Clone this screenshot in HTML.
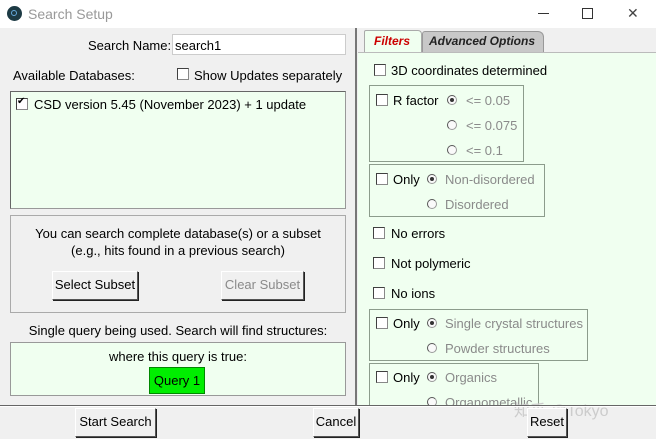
<!DOCTYPE html>
<html><head><meta charset="utf-8"><style>
*{margin:0;padding:0;box-sizing:border-box}
body{width:656px;height:439px;overflow:hidden;background:#f0f0f0;font-family:"Liberation Sans","DejaVu Sans",sans-serif;font-size:13px;color:#000;position:relative}
.a{position:absolute;white-space:nowrap}
.cb{position:absolute;width:12px;height:12px;background:#fff;border:1px solid #888;border-top-color:#404040;border-left-color:#404040}
.rd{position:absolute;width:10px;height:10px;border-radius:50%;border:1px solid #999;border-left-color:#555;border-top-color:#555;background:#fafafa}
.rd.on::after{content:"";position:absolute;left:2px;top:2px;width:4px;height:4px;border-radius:50%;background:#333}
.g{color:#8a8a8a}
.box{position:absolute;border:1px solid #8c9c8c}
.btn{position:absolute;background:#f0f0f0;border:1px solid;border-color:#fff #555 #555 #fff;box-shadow:1px 1px 0 #222;text-align:center;line-height:26px}
</style></head><body>
<div class="a" style="left:0;top:0;width:656px;height:28px;background:#fff"></div>
<div class="a" style="left:7px;top:6px;width:15px;height:15px;border-radius:50%;background:#1d3a44"></div>
<div class="a" style="left:11px;top:10px;width:6px;height:6px;border-radius:50%;border:1.5px solid #6ad"></div>
<div class="a g" style="left:28px;top:6px;font-size:14px;color:#999">Search Setup</div>
<div class="a" style="left:538px;top:13px;width:11px;height:1px;background:#333"></div>
<div class="a" style="left:582px;top:8px;width:11px;height:11px;border:1px solid #333"></div>
<div class="a" style="left:627px;top:5px;font-size:14px;color:#444">✕</div>
<!-- left -->
<div class="a" style="left:88px;top:38px">Search Name:</div>
<div class="a" style="left:172px;top:34px;width:174px;height:21px;background:#fff;border:1px solid #ccc;padding:3px 2px">search1</div>
<div class="a" style="left:13px;top:68px">Available Databases:</div>
<div class="cb" style="left:177px;top:68px"></div>
<div class="a" style="left:194px;top:68px">Show Updates separately</div>
<div class="a" style="left:10px;top:91px;width:336px;height:118px;background:#f0fff0;border:1px solid #999;border-top-color:#666;border-left-color:#666"></div>
<div class="cb" style="left:16px;top:98px"></div><div class="a" style="left:17px;top:96px;font-size:10px">✔</div>
<div class="a" style="left:34px;top:97px">CSD version 5.45 (November 2023) + 1 update</div>
<div class="a" style="left:10px;top:215px;width:336px;height:98px;border:1px solid #aaa"></div>
<div class="a" style="left:10px;top:225px;width:336px;text-align:center;line-height:17px;white-space:normal">You can search complete database(s) or a subset<br>(e.g., hits found in a previous search)</div>
<div class="btn" style="left:52px;top:271px;width:86px;height:29px">Select Subset</div>
<div class="btn g" style="left:221px;top:271px;width:83px;height:29px">Clear Subset</div>
<div class="a" style="left:10px;top:323px;width:336px;text-align:center">Single query being used. Search will find structures:</div>
<div class="a" style="left:10px;top:342px;width:336px;height:54px;background:#f0fff0;border:1px solid #999"></div>
<div class="a" style="left:10px;top:349px;width:336px;text-align:center">where this query is true:</div>
<div class="a" style="left:149px;top:367px;width:56px;height:27px;background:#00ee00;border:1px solid #080;text-align:center;line-height:26px">Query 1</div>
<!-- right -->
<div class="a" style="left:355px;top:28px;width:2px;height:378px;background:#777"></div>
<div class="a" style="left:364px;top:30px;width:58px;height:23px;background:#f0fff0;border:1px solid #aaa;border-bottom:none;border-radius:2px 4px 0 0"></div>
<div class="a" style="left:374px;top:34px;color:#c00;font-style:italic;font-weight:bold;font-size:12px">Filters</div>
<div class="a" style="left:422px;top:31px;width:122px;height:21px;background:#c8c8c8;border:1px solid #999;border-bottom:none;border-radius:3px 6px 0 0"></div>
<div class="a" style="left:429px;top:34px;font-style:italic;font-weight:bold;font-size:12px;color:#222">Advanced Options</div>
<div class="a" style="left:358px;top:52px;width:298px;height:354px;background:#f0fff0;border-top:1px solid #bbb"></div>
<div class="cb" style="left:374px;top:64px"></div><div class="a" style="left:391px;top:63px">3D coordinates determined</div>
<div class="box" style="left:369px;top:85px;width:155px;height:77px"></div>
<div class="cb" style="left:376px;top:94px"></div><div class="a" style="left:393px;top:93px">R factor</div>
<div class="rd on" style="left:447px;top:95px"></div><div class="a g" style="left:466px;top:93px">&lt;= 0.05</div>
<div class="rd" style="left:447px;top:120px"></div><div class="a g" style="left:466px;top:118px">&lt;= 0.075</div>
<div class="rd" style="left:447px;top:145px"></div><div class="a g" style="left:466px;top:143px">&lt;= 0.1</div>
<div class="box" style="left:369px;top:164px;width:176px;height:53px"></div>
<div class="cb" style="left:376px;top:173px"></div><div class="a" style="left:393px;top:172px">Only</div>
<div class="rd on" style="left:427px;top:174px"></div><div class="a g" style="left:445px;top:172px">Non-disordered</div>
<div class="rd" style="left:427px;top:199px"></div><div class="a g" style="left:445px;top:197px">Disordered</div>
<div class="cb" style="left:373px;top:227px"></div><div class="a" style="left:391px;top:226px">No errors</div>
<div class="cb" style="left:373px;top:257px"></div><div class="a" style="left:391px;top:256px">Not polymeric</div>
<div class="cb" style="left:373px;top:287px"></div><div class="a" style="left:391px;top:286px">No ions</div>
<div class="box" style="left:369px;top:309px;width:219px;height:52px"></div>
<div class="cb" style="left:376px;top:317px"></div><div class="a" style="left:393px;top:316px">Only</div>
<div class="rd on" style="left:427px;top:318px"></div><div class="a g" style="left:445px;top:316px">Single crystal structures</div>
<div class="rd" style="left:427px;top:343px"></div><div class="a g" style="left:445px;top:341px">Powder structures</div>
<div class="box" style="left:369px;top:363px;width:170px;height:43px;border-bottom:none"></div>
<div class="cb" style="left:376px;top:371px"></div><div class="a" style="left:393px;top:370px">Only</div>
<div class="rd on" style="left:427px;top:372px"></div><div class="a g" style="left:445px;top:370px">Organics</div>
<div class="rd" style="left:427px;top:397px"></div><div class="a g" style="left:445px;top:395px;height:10px;overflow:hidden">Organometallic</div>
<div class="a" style="left:514px;top:397px;font-size:16px;color:#ccc;font-family:'Liberation Sans','Noto Sans CJK SC',sans-serif">知乎 @Tokyo</div>
<!-- bottom -->
<div class="a" style="left:0;top:405px;width:656px;height:1px;background:#666"></div>
<div class="a" style="left:0;top:406px;width:656px;height:1px;background:#fff"></div>
<div class="btn" style="left:75px;top:408px;width:81px;height:29px">Start Search</div>
<div class="btn" style="left:313px;top:408px;width:46px;height:29px">Cancel</div>
<div class="btn" style="left:527px;top:408px;width:40px;height:29px">Reset</div>
</body></html>
